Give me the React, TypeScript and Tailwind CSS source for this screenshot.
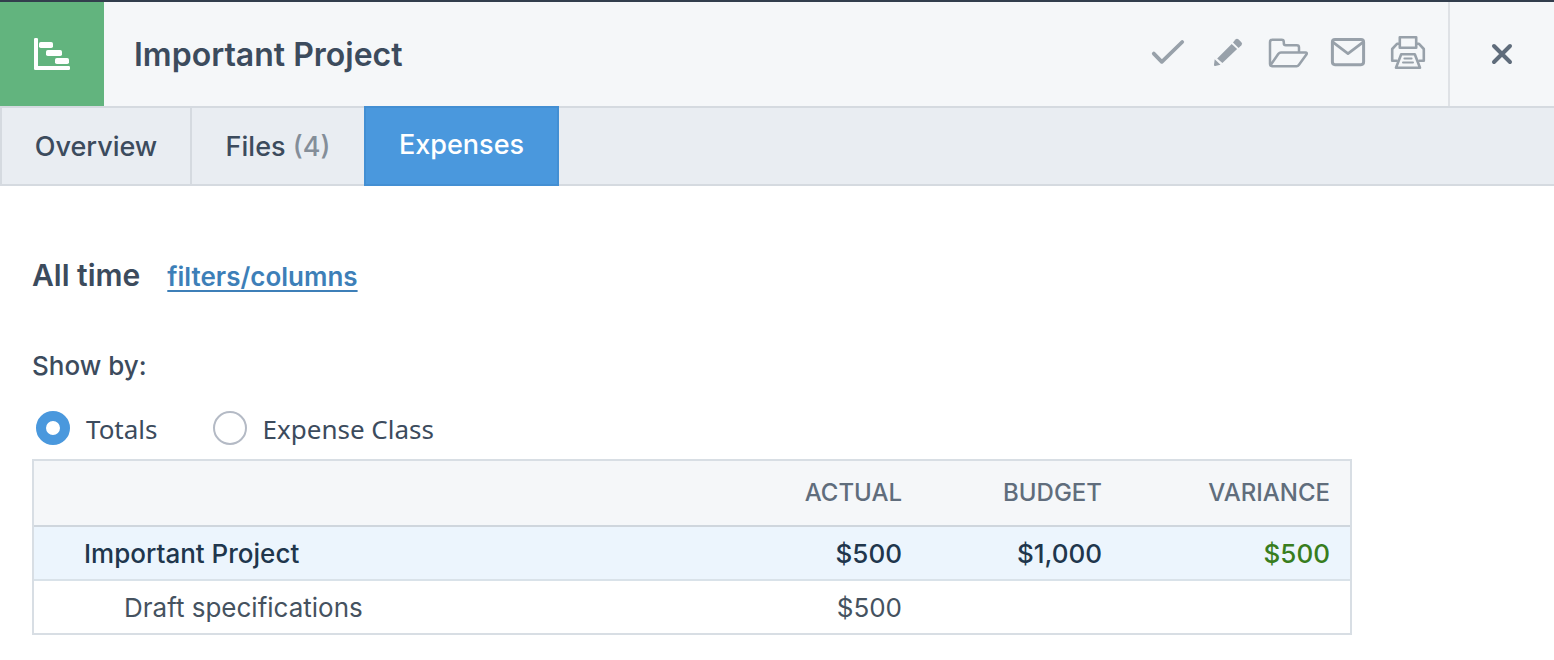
import { useState, type ReactNode } from "react";

type Row = {
  name: string;
  actual: string;
  budget: string;
  variance: string;
};

const PROJECT: Row = {
  name: "Important Project",
  actual: "$500",
  budget: "$1,000",
  variance: "$500",
};

const TASKS: Row[] = [
  { name: "Draft specifications", actual: "$500", budget: "", variance: "" },
];

/** Gantt-style mark shown in the green project square. */
function GanttIcon() {
  return (
    <svg width="36" height="32" viewBox="0 0 36 32" fill="currentColor" aria-hidden="true">
      <path d="M1.2 0h1.6Q4 0 4 1.2V28h30.8Q36 28 36 29.2v1.6Q36 32 34.8 32H1.2Q0 32 0 30.8V1.2Q0 0 1.2 0z" />
      <rect x="5" y="4" width="14" height="6" rx="1.8" />
      <rect x="12" y="12" width="16" height="6" rx="1.8" />
      <rect x="21" y="20" width="14" height="6" rx="1.8" />
    </svg>
  );
}

function Glyph({ children }: { children: ReactNode }) {
  return (
    <svg
      width="40"
      height="40"
      viewBox="0 0 40 40"
      fill="none"
      stroke="currentColor"
      strokeLinecap="round"
      strokeLinejoin="round"
      aria-hidden="true"
    >
      {children}
    </svg>
  );
}

const ACTIONS: { label: string; icon: ReactNode }[] = [
  {
    label: "Mark complete",
    icon: (
      <Glyph>
        <path d="M5.8 19.6l8 8.2L34.2 8" strokeWidth="3.8" />
      </Glyph>
    ),
  },
  {
    label: "Edit",
    icon: (
      <Glyph>
        <g fill="currentColor" stroke="none">
          <path d="M6.7 25.3l5.8 5.4-5.2 1.2q-1.5.2-1.3-1.2z" />
          <path d="M9.2 24.4L23.7 9.9l5.4 5-14.7 14.2z" />
          <path d="M25 8.6l2.4-3.1q1.4-1.5 3-.3l3 3q1.5 1.6 0 3.1L30.6 14z" />
        </g>
      </Glyph>
    ),
  },
  {
    label: "Open folder",
    icon: (
      <Glyph>
        <path
          d="M31 18.5v-5q0-2.2-2.2-2.2h-11q-2 0-2-2V8q0-2.2-2.2-2.2H4.4Q2 5.8 2 8.2v21.6q0 2.4 2.4 2.4h24.2q1.4 0 2.4-1.4l7.4-10.3q1.2-2-1-2H13q-1.6 0-2.6 1.3L3 30.5"
          strokeWidth="2.5"
        />
      </Glyph>
    ),
  },
  {
    label: "Email",
    icon: (
      <Glyph>
        <rect x="4.4" y="5.4" width="31.2" height="25.3" rx="2.6" strokeWidth="3" />
        <path d="M5.2 8.4L20 19.6 34.8 8.4" strokeWidth="2.7" />
      </Glyph>
    ),
  },
  {
    label: "Print",
    icon: (
      <Glyph>
        <g strokeWidth="2.6">
          <path d="M11.8 3.2h16.4v10.6H11.8z" />
          <path d="M11.4 9.8H9L4.2 15v11.8h4.4" />
          <path d="M28.6 9.8H31l4.8 5.2v11.8h-4.4" />
          <path d="M13.2 20.2h13.6l5.2 13.6H8z" />
        </g>
        <path d="M16.4 24.5h7.2M15 28.5h10" strokeWidth="2" />
      </Glyph>
    ),
  },
];

function Header() {
  return (
    <header className="flex h-[106px] border-t-2 border-[#323e4d] bg-[#f5f7f9]">
      <div className="grid w-[104px] place-items-center bg-[#62b47e] text-white">
        <GanttIcon />
      </div>
      <h1 className="flex-1 self-center pt-[2px] pl-[30px] text-[32px] font-semibold text-[#3c4b5d]">
        Important Project
      </h1>
      <div className="flex items-center pr-[10px] text-[#98a1aa]">
        {ACTIONS.map((action) => (
          <button
            key={action.label}
            type="button"
            aria-label={action.label}
            className="grid h-[60px] w-[60px] place-items-center"
          >
            {action.icon}
          </button>
        ))}
      </div>
      <button
        type="button"
        aria-label="Close"
        className="grid w-[106px] place-items-center border-l-2 border-[#dfe2e6] text-[#5f6c7b]"
      >
        <Glyph>
          <path d="M12 12l16 16M28 12L12 28" strokeWidth="4" />
        </Glyph>
      </button>
    </header>
  );
}

function Tabs() {
  return (
    <nav className="flex h-20 bg-[#e9edf2] text-[27px] font-medium text-[#3c4b5d]">
      <button type="button" className="w-[190px] border-y-2 border-l-2 border-[#d5dae0] pt-[2px]">
        Overview
      </button>
      <button type="button" className="w-[174px] border-y-2 border-l-2 border-[#d5dae0] pt-[2px]">
        Files <span className="text-[#848e99]">(4)</span>
      </button>
      <button
        type="button"
        aria-current="page"
        className="w-[195px] border-2 border-[#438fd3] bg-[#4a98dd] pb-[2px] text-white"
      >
        Expenses
      </button>
      <div className="flex-1 border-y-2 border-[#d5dae0]" />
    </nav>
  );
}

type RadioProps = {
  label: string;
  checked: boolean;
  onSelect: () => void;
};

function Radio({ label, checked, onSelect }: RadioProps) {
  return (
    <label className="flex items-center gap-4">
      <input
        type="radio"
        name="show-by"
        checked={checked}
        onChange={onSelect}
        className="size-[34px] appearance-none rounded-full border-2 border-[#b4bac5] bg-white checked:border-[10px] checked:border-[#4a98dd]"
      />
      <span className="pt-[2px]">{label}</span>
    </label>
  );
}

function ExpensesTable() {
  return (
    <table className="w-full max-w-[1320px] table-fixed border-separate border-spacing-0 border-2 border-[#d8dee4] text-right text-[26px]">
      <colgroup>
        <col />
        <col className="w-[200px]" />
        <col className="w-[200px]" />
        <col className="w-[228px]" />
      </colgroup>
      <thead>
        <tr className="h-[66px] bg-[#f5f7f9] text-2xl text-[#606d7c] *:border-b-2 *:border-[#cfd6dd] *:pr-5 *:font-medium">
          <th scope="col" aria-label="Name" />
          <th scope="col">ACTUAL</th>
          <th scope="col">BUDGET</th>
          <th scope="col">VARIANCE</th>
        </tr>
      </thead>
      <tbody>
        <tr className="h-[54px] bg-[#ecf5fd] font-medium text-[#20364c] *:border-b-2 *:border-[#d9e2e9] *:pr-5">
          <th scope="row" className="pl-[50px] text-left font-medium">
            {PROJECT.name}
          </th>
          <td>{PROJECT.actual}</td>
          <td>{PROJECT.budget}</td>
          <td className="text-[#387d1d]">{PROJECT.variance}</td>
        </tr>
        {TASKS.map((task) => (
          <tr key={task.name} className="h-[52px] text-[#45525f] *:pr-5">
            <th scope="row" className="pl-[90px] text-left font-normal">
              {task.name}
            </th>
            <td>{task.actual}</td>
            <td>{task.budget}</td>
            <td>{task.variance}</td>
          </tr>
        ))}
      </tbody>
    </table>
  );
}

export default function App() {
  const [showBy, setShowBy] = useState("totals");

  return (
    <div className="min-h-screen bg-white font-['Inter',sans-serif]">
      <Header />
      <Tabs />
      <main className="px-8 pt-[69px] text-[#3c4b5d]">
        <div className="flex items-baseline gap-[27px]">
          <h2 className="text-[30px] leading-10 font-semibold">All time</h2>
          <a
            href="#filters"
            className="text-[26px] font-semibold text-[#3d7fb8] underline decoration-2 underline-offset-4"
          >
            filters/columns
          </a>
        </div>
        <fieldset className="mt-[50px] pb-[13px]">
          <legend className="text-[26px] leading-10 font-medium">Show by:</legend>
          <div className="flex gap-[55px] pt-6 pl-1 font-['Noto_Sans',sans-serif] text-[26px] leading-[34px]">
            <Radio
              label="Totals"
              checked={showBy === "totals"}
              onSelect={() => setShowBy("totals")}
            />
            <Radio
              label="Expense Class"
              checked={showBy === "class"}
              onSelect={() => setShowBy("class")}
            />
          </div>
        </fieldset>
        <ExpensesTable />
      </main>
    </div>
  );
}
